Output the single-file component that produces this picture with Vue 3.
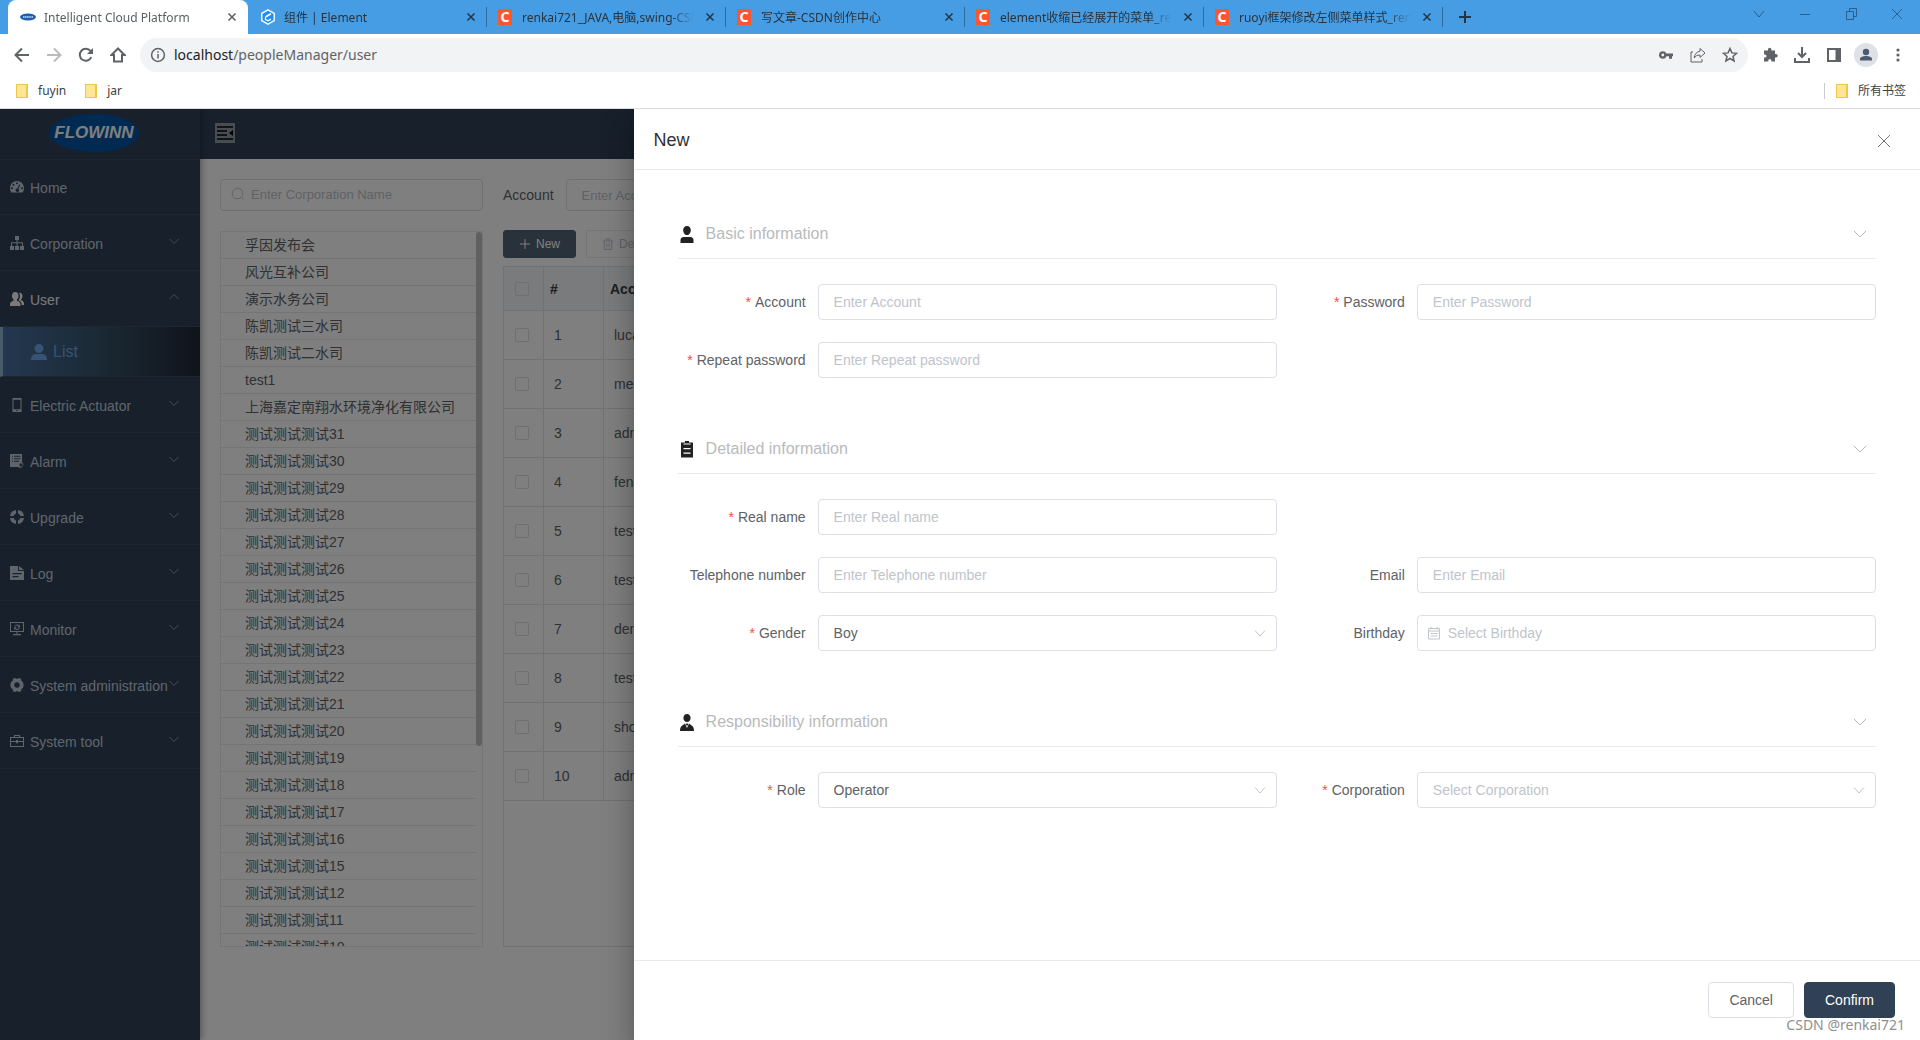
<template>
<div class="browser">

  <!-- Tab strip -->
  <header class="tab-strip">
    <div class="tab" v-for="(tab, i) in tabs" :key="tab.title" :class="{active: i===0}">
      <svg v-if="tab.icon==='flowinn'" class="favicon" viewBox="0 0 16 16">
        <ellipse cx="8" cy="8" rx="8" ry="3.5" fill="#1c5fae"/>
        <path d="M3 8h10" stroke="#c9dcf2" stroke-width="1.6" stroke-dasharray="1.4 .4"/>
      </svg>
      <svg v-else-if="tab.icon==='element'" class="favicon" viewBox="0 0 16 16">
        <path d="M8 .8l6.2 3.6v7.2L8 15.2 1.8 11.6V4.4z" fill="#1d8ffb" stroke="#fff" stroke-width="1.4"/>
        <path d="M10.8 5.3L5.5 8.2v2.3L8 11.8l3-1.7M6 7.3l5-2.6" fill="none" stroke="#fff" stroke-width="1.3"/>
      </svg>
      <span v-else class="favicon csdn">C</span>
      <span class="tab-title">{{ tab.title }}</span>
      <button class="tab-close" aria-label="Close tab">
        <svg viewBox="0 0 10 10"><path d="M1.5 1.5l7 7M8.5 1.5l-7 7"/></svg>
      </button>
    </div>
    <button class="tab-add" aria-label="New tab">
      <svg viewBox="0 0 12 12"><path d="M6 0v12M0 6h12"/></svg>
    </button>
    <div class="window-btns">
      <button v-for="b in windowBtns" :key="b.name" :aria-label="b.name">
        <svg viewBox="0 0 12 12"><path :d="b.d"/></svg>
      </button>
    </div>
  </header>

  <!-- Toolbar -->
  <div class="toolbar">
    <button class="nav-btn" aria-label="Back"><svg viewBox="0 0 16 16"><path d="M15 8H2M8 1.5L1.5 8 8 14.5"/></svg></button>
    <button class="nav-btn off" aria-label="Forward"><svg viewBox="0 0 16 16"><path d="M1 8h13M8 1.5L14.5 8 8 14.5"/></svg></button>
    <button class="nav-btn" aria-label="Reload">
      <svg viewBox="0 0 16 16"><path d="M13.3 10.2A6 6 0 1 1 12.5 4"/><path class="fill" d="M15 1v6H9z"/></svg>
    </button>
    <button class="nav-btn" aria-label="Home page"><svg viewBox="0 0 16 16"><path d="M8 1.5L1.5 8H4v6.5h8V8h2.5z"/></svg></button>

    <div class="omnibox">
      <svg class="info" viewBox="0 0 16 16"><circle cx="8" cy="8" r="6.4"/><path d="M8 7v4.5M8 4.2v1.6"/></svg>
      <a class="url" href="#"><b>localhost</b>/peopleManager/user</a>
      <button aria-label="Passwords">
        <svg viewBox="0 0 16 16"><path class="solid" fill-rule="evenodd" d="M4.8 4.2a3.8 3.8 0 1 0 3.6 5H11v2.5h3V9.2h1V6.5H8.4A3.8 3.8 0 0 0 4.8 4.2zm0 2.4a1.4 1.4 0 1 1 0 2.8 1.4 1.4 0 0 1 0-2.8z"/></svg>
      </button>
      <button aria-label="Share">
        <svg viewBox="0 0 16 16"><path class="thin" d="M3 5H1v10h11v-3M10 1.5L15 6l-5 4.5V8C7 8 5.5 9 4.2 11c.3-3.5 2-6 5.8-6.8z"/></svg>
      </button>
      <button aria-label="Bookmark this tab">
        <svg viewBox="0 0 16 16"><path class="mid" d="M8 1.5l1.9 4.4 4.7.4-3.6 3.1 1.1 4.6L8 11.5 3.9 14 5 9.4 1.4 6.3l4.7-.4z"/></svg>
      </button>
    </div>

    <div class="tools">
      <button aria-label="Extensions">
        <svg viewBox="0 0 16 16"><path class="solid" d="M6 2.5a1.7 1.7 0 0 1 3.4 0V3.5H13V7h1a1.7 1.7 0 0 1 0 3.4h-1V14.5H9.3v-1a1.5 1.5 0 0 0-3 0v1H2V10.5h1a1.5 1.5 0 0 0 0-3H2v-4h4z"/></svg>
      </button>
      <button aria-label="Downloads"><svg viewBox="0 0 16 16"><path d="M8 0v9.5M4 6l4 4 4-4M1 11v4h14v-4"/></svg></button>
      <button aria-label="Side panel"><svg viewBox="0 0 16 16"><path d="M2 2h12v12H2z"/><path class="solid" d="M9.5 2H14v12H9.5z"/></svg></button>
      <button class="avatar" aria-label="Profile">
        <svg viewBox="0 0 16 16"><circle class="solid" cx="8" cy="5" r="3.2"/><path class="solid" d="M2 13.5V12c0-2 3-3 6-3s6 1 6 3v1.5z"/></svg>
      </button>
      <button aria-label="Menu"><svg viewBox="0 0 16 16"><circle class="solid" cx="8" cy="3" r="1.6"/><circle class="solid" cx="8" cy="8" r="1.6"/><circle class="solid" cx="8" cy="13" r="1.6"/></svg></button>
    </div>
  </div>

  <!-- Bookmarks -->
  <nav class="bookmarks">
    <a href="#"><i class="folder"></i>fuyin</a>
    <a href="#"><i class="folder"></i>jar</a>
    <a href="#" class="all"><i class="folder"></i>所有书签</a>
  </nav>

  <div class="viewport">

    <!-- Sidebar -->
    <aside class="sidebar">
      <div class="logo"><span>FLOWINN</span></div>
      <nav>
        <template v-for="item in menu" :key="item.name">
          <a href="#" class="menu-item" :class="{open: item.open}">
            <svg class="menu-icon" viewBox="0 0 14 14"><path fill-rule="evenodd" :d="icons[item.icon]"/></svg>
            <span>{{ item.name }}</span>
            <svg v-if="item.icon!=='home'" class="arrow" :class="{up: item.open}" viewBox="0 0 10 10"><path d="M.5 3L5 7.5 9.5 3"/></svg>
          </a>
          <a v-if="item.open" href="#" class="menu-sub">
            <svg viewBox="0 0 16 16"><path :d="icons.person"/></svg>
            <span>List</span>
          </a>
        </template>
      </nav>
    </aside>

    <!-- Page behind the drawer -->
    <div class="main">
      <div class="navbar">
        <button class="hamburger" aria-label="Toggle menu">
          <svg viewBox="0 0 20 20"><path d="M2 4h16M2 8h10M2 12h10M2 16h16" stroke="#000" stroke-width="1.5"/><path d="M18 7v6l-4-3z"/></svg>
        </button>
      </div>
      <div class="content">
        <div class="left-col">
          <div class="search-box">
            <svg viewBox="0 0 14 14"><circle cx="6.5" cy="6.5" r="5.3"/><path d="M10.3 10.3l2.2 2.2"/></svg>
            <input type="text" placeholder="Enter Corporation Name" aria-label="Corporation name"/>
          </div>
          <div class="corp-box">
            <ul class="corp-list">
              <li v-for="c in corporations" :key="c">{{ c }}</li>
            </ul>
            <div class="thumb"></div>
          </div>
        </div>

        <div class="right-col">
          <div class="filter">
            <label for="filter-account">Account</label>
            <input id="filter-account" type="text" placeholder="Enter Account"/>
          </div>
          <div class="actions">
            <button class="btn-new"><svg viewBox="0 0 12 12"><path d="M6 1v10M1 6h10"/></svg>New</button>
            <button class="btn-del"><svg viewBox="0 0 12 12"><path d="M1 3h10M4 3V1h4v2M2.2 3v8.3h7.600V3M4.8 5v4.3M7.2 5v4.3"/></svg>Delete</button>
          </div>
          <div class="table-box">
            <table>
              <thead>
                <tr>
                  <th class="check"><input type="checkbox" aria-label="Select all"/></th>
                  <th class="num">#</th>
                  <th>Account</th>
                </tr>
              </thead>
              <tbody>
                <tr v-for="(u, i) in users" :key="i">
                  <td class="check"><input type="checkbox" :aria-label="'Select ' + u"/></td>
                  <td class="num">{{ i + 1 }}</td>
                  <td>{{ u }}</td>
                </tr>
              </tbody>
            </table>
          </div>
        </div>
      </div>
    </div>

    <div class="mask"></div>

    <!-- Drawer -->
    <section class="drawer">
      <header class="drawer-header">
        <h2>New</h2>
        <button aria-label="Close"><svg viewBox="0 0 14 14"><path d="M1 1l12 12M13 1L1 13"/></svg></button>
      </header>

      <form class="drawer-body" @submit.prevent>
        <div class="group" v-for="g in groups" :key="g.title">
          <div class="group-header">
            <svg class="group-icon" viewBox="0 0 16 18"><path fill-rule="evenodd" :d="icons[g.icon]"/></svg>
            <h3>{{ g.title }}</h3>
            <svg class="chevron" viewBox="0 0 14 14"><path d="M1 4l6 6 6-6"/></svg>
          </div>
          <div class="fields">
            <div class="field" v-for="f in g.fields" :key="f.id" :class="{wide: f.wide}">
              <label :for="f.id"><em v-if="f.required">*</em>{{ f.label }}</label>
              <div class="control">
                <template v-if="f.options">
                  <select :id="f.id" v-model="form[f.id]" :class="{empty: !form[f.id]}">
                    <option v-if="f.placeholder" value="">{{ f.placeholder }}</option>
                    <option v-for="o in f.options" :key="o">{{ o }}</option>
                  </select>
                  <svg class="caret" viewBox="0 0 12 12"><path d="M1 3.5L6 9l5-5.5"/></svg>
                </template>
                <template v-else>
                  <svg v-if="f.date" class="calendar" viewBox="0 0 14 14"><path d="M1.5 2.5h11v10.5h-11zM1.5 5h11M4 1v2.5M10 1v2.5M3.5 7.5h7M3.5 10h7"/></svg>
                  <input :id="f.id" v-model="form[f.id]" :type="f.type || 'text'" :class="{date: f.date}" :placeholder="f.placeholder"/>
                </template>
              </div>
            </div>
          </div>
        </div>
      </form>

      <footer class="drawer-footer">
        <button class="cancel">Cancel</button>
        <button class="confirm">Confirm</button>
      </footer>
    </section>

    <div class="watermark">CSDN @renkai721</div>
  </div>
</div>
</template>


<script setup>
import { reactive } from 'vue'

const tabs = [
  { title:'Intelligent Cloud Platform', icon:'flowinn' },
  { title:'组件 | Element', icon:'element' },
  { title:'renkai721_JAVA,电脑,swing-CSDN博客', icon:'csdn' },
  { title:'写文章-CSDN创作中心', icon:'csdn' },
  { title:'element收缩已经展开的菜单_renkai721', icon:'csdn' },
  { title:'ruoyi框架修改左侧菜单样式_renkai721', icon:'csdn' }
]

const windowBtns = [
  { name:'Search tabs', d:'M1 3l5 6 5-6' },
  { name:'Minimize', d:'M1 6.5h10' },
  { name:'Restore', d:'M1.5 3.5h7v8h-7zM4.5 3.5v-3h7v8h-3' },
  { name:'Close', d:'M1 1l10 10M11 1L1 11' }
]

const icons = {
  home:'M7 1a7 7 0 0 0-7 7c0 1.8.5 3.2 1.3 4.5h11.4C13.5 11.2 14 9.8 14 8a7 7 0 0 0-7-7zM7 2.3a1 1 0 1 1 0 2 1 1 0 0 1 0-2zM3.5 3.7a1 1 0 1 1 0 2 1 1 0 0 1 0-2zM2 7.3a1 1 0 1 1 0 2 1 1 0 0 1 0-2zM12 7.3a1 1 0 1 1 0 2 1 1 0 0 1 0-2zM9.3 4.3l1 .4-1.9 4.2a1.7 1.7 0 1 1-1-.4z',
  tree:'M5 0h4v4H7.5v2.2H13V10h1v4h-4v-4h2V7.2H7.5V10H9v4H5v-4h1.5V7.2H2V10h2v4H0v-4h1V6.2h5.5V4H5z',
  users:'M5.2 0C7.2 0 8.5 1.5 8.5 3.8c0 1.7-.6 3-1.5 3.8v1.1c1.9.7 3.3 1.4 3.5 3.3V14H0v-2c.2-1.9 1.5-2.6 3.5-3.3V7.6C2.6 6.8 2 5.5 2 3.8 2 1.5 3.2 0 5.2 0zM8.8.8c2.2-.5 3.7 1 3.7 3.2 0 1.5-.6 2.6-1.3 3.3v1C13 9 14 9.8 14 11.5V13h-2.3c0-2.5-.8-3.7-2.9-4.600V8c.8-1 1.2-2.5 1.1-4.2C9.8 2.5 9.5 1.5 8.8.8z',
  phone:'M2.5 0h9v14h-9zM3.5 1.8v9.5h7V1.8zM6 12.2v.9h2v-.9z',
  alarm:'M0 0h12v8.2a3 3 0 1 1-3.8 4.8H0zM2 1.8v1h1v-1zM4 1.8v1h6.5v-1zM2 4.3v1h1v-1zM4 4.3v1h6.5v-1zM2 6.8v1h1v-1zM4 6.8v1h5v-1zM11 9.3a1.6 1.6 0 1 0 0 3.2 1.6 1.6 0 0 0 0-3.2z',
  ring:'M6 0v3.6A3.6 3.6 0 0 0 3.6 6H0a7 7 0 0 1 6-6zM8 0v3.6A3.6 3.6 0 0 1 10.4 6H14a7 7 0 0 0-6-6zM0 8h3.6A3.6 3.6 0 0 0 6 10.4V14a7 7 0 0 1-6-6zM14 8h-3.6A3.6 3.6 0 0 1 8 10.4V14a7 7 0 0 0 6-6z',
  file:'M0 0h8v5h6v9H0zM9 0l5 4H9zM2.5 7v1.2h9V7zM2.5 10v1.2h6V10z',
  monitor:'M0 0h14v10H7.5v2H11v1.2H3V12h3.5v-2H0zM1 1v8h12V1zM7 2.5c1 0 1.8.5 2.2 1.2V3h.8v2.4H7.8v-.8h.9A2 2 0 0 0 5.2 4.7L4.4 4.4A2.8 2.8 0 0 1 7 2.5zM4.1 5.3h2.2v.7h-.9a2 2 0 0 0 3.4-.1l.8.3A2.8 2.8 0 0 1 4.9 7v.6h-.8z',
  gear:'M5 0l2 1 2-1 2 .8.4 2.1 1.8 1.3V6L14 7l-.8 1v1.800l-1.8 1.3-.4 2.1L9 14l-2-1-2 1-2-.8-.4-2.1L.8 9.800V8L0 7l.8-1V4.200l1.800-1.300L3 .8zM7 4.300a2.7 2.7 0 1 0 0 5.4 2.7 2.7 0 0 0 0-5.4z',
  tool:'M4 1h6v2h4v10H0V3h4zM5 2v1h4V2zM1 4v3h5V6h2v1h5V4zM1 8v4h12V8H8v1.2H6V8z',
  person:'M8 0a4.5 4.5 0 0 1 0 9 4.5 4.5 0 0 1 0-9zM0 16c0-4 2-6 5-6h6c3 0 5 2 5 6z',
  basic:'M8 1c2.4 0 3.8 1.8 3.8 4.2S10.2 10 8 10 4.200 7.600 4.200 5.200 5.600 1 8 1zM1.500 18v-3c0-2 1.500-3 3.500-3h6c2 0 3.500 1 3.500 3v3z',
  detail:'M6 1h4v1.500h4V17.500H2V2.500h4zM4.500 3.500v1h7v-1zM4.500 8v1.300h7V8zM4.500 12.500v1.300h7v-1.300z',
  duty:'M8 1c2.200 0 3.600 1.800 3.600 4S10.200 9 8 9 4.400 7.200 4.400 5 5.800 1 8 1zM1 18c0-3 .8-4.800 3-6l2-1.500L8 15l2-4.500 2 1.500c2.200 1.200 3 3 3 6zM7.200 10.500h1.600l.4 1L8 13l-1.200-1.500z'
}

const menu = [
  { name:'Home', icon:'home' },
  { name:'Corporation', icon:'tree' },
  { name:'User', icon:'users', open:true },
  { name:'Electric Actuator', icon:'phone' },
  { name:'Alarm', icon:'alarm' },
  { name:'Upgrade', icon:'ring' },
  { name:'Log', icon:'file' },
  { name:'Monitor', icon:'monitor' },
  { name:'System administration', icon:'gear' },
  { name:'System tool', icon:'tool' }
]

const corporations = [
  '孚因发布会', '风光互补公司', '演示水务公司', '陈凯测试三水司', '陈凯测试二水司',
  'test1', '上海嘉定南翔水环境净化有限公司',
  ...[31,30,29,28,27,26,25,24,23,22,21,20,19,18,17,16,15,12,11,10].map(n => '测试测试测试' + n)
]

const users = ['lucas', 'merry', 'admin1', 'feng', 'test01', 'test02', 'demo', 'test03', 'shop', 'admin']

const form = reactive({
  account:'',
  password:'',
  repeat:'',
  realName:'',
  phone:'',
  email:'',
  gender:'Boy',
  birthday:'',
  role:'Operator',
  corporation:''
})

const groups = [
  {
    title:'Basic information',
    icon:'basic',
    fields:[
      { id:'account', label:'Account', placeholder:'Enter Account', required:true },
      { id:'password', label:'Password', placeholder:'Enter Password', required:true, type:'password' },
      { id:'repeat', label:'Repeat password', placeholder:'Enter Repeat password', required:true, type:'password' }
    ]
  },
  {
    title:'Detailed information',
    icon:'detail',
    fields:[
      { id:'realName', label:'Real name', placeholder:'Enter Real name', required:true, wide:true },
      { id:'phone', label:'Telephone number', placeholder:'Enter Telephone number' },
      { id:'email', label:'Email', placeholder:'Enter Email' },
      { id:'gender', label:'Gender', required:true, options:['Boy', 'Girl'] },
      { id:'birthday', label:'Birthday', placeholder:'Select Birthday', date:true }
    ]
  },
  {
    title:'Responsibility information',
    icon:'duty',
    fields:[
      { id:'role', label:'Role', required:true, options:['Operator', 'Administrator'] },
      { id:'corporation', label:'Corporation', placeholder:'Select Corporation', required:true, options:['test1'] }
    ]
  }
]
</script>


<style>
body{
  margin:0;
}
</style>

<style scoped>
*{
  box-sizing:border-box;
}

.browser{
  height:100vh;
  display:flex;
  flex-direction:column;
  background:#fff;
  font-family:"Liberation Sans","Noto Sans CJK SC",sans-serif;
  font-size:14px;
  color:#606266;
}

button{
  padding:0;
  border:none;
  background:none;
  font:inherit;
  color:inherit;
  cursor:pointer;
  display:flex;
  align-items:center;
  justify-content:center;
}

a{
  color:inherit;
  text-decoration:none;
}

svg{
  display:block;
  flex:none;
  fill:none;
  stroke:currentColor;
}

input,
select{
  font:inherit;
  outline:none;
}

/* tab strip */
.tab-strip{
  height:34px;
  flex:none;
  padding-left:8px;
  display:flex;
  background:#479de4;
  color:#27333f;
  font-family:"Noto Sans","Noto Sans CJK SC",sans-serif;
  font-size:12px;
}

.tab{
  width:239px;
  padding:0 8px 0 11px;
  display:flex;
  align-items:center;
  gap:8px;
  background:linear-gradient(#2d6c9f,#2d6c9f) right center / 1px 20px no-repeat;
}

.tab.active{
  width:240px;
  padding-left:12px;
  background:#fff;
  border-radius:8px 8px 0 0;
  color:#5a5e63;
}

.tab.active + .tab{
  padding-left:12px;
}

.favicon{
  width:16px;
  height:16px;
  stroke:none;
}

.csdn{
  width:14px;
  margin-right:2px;
  flex:none;
  background:#fc5531;
  color:#fff;
  font-weight:bold;
  font-size:14px;
  line-height:15px;
  text-align:center;
}

.tab-title{
  flex:1;
  overflow:hidden;
  white-space:nowrap;
  mask-image:linear-gradient(90deg,#000 calc(100% - 24px),transparent);
}

.tab-close{
  width:16px;
  height:16px;
}

.tab-close svg{
  width:10px;
  stroke-width:1.5;
}

.tab-add{
  width:44px;
}

.tab-add svg{
  width:12px;
  stroke-width:2;
}

.window-btns{
  margin-left:auto;
  display:flex;
  height:28px;
  color:#2a5f8c;
}

.window-btns button{
  width:46px;
}

.window-btns svg{
  width:12px;
}

/* toolbar */
.toolbar{
  height:41px;
  flex:none;
  padding:0 6px;
  display:flex;
  align-items:center;
  color:#5f6368;
  font-family:"Noto Sans","Noto Sans CJK SC",sans-serif;
}

.toolbar svg{
  width:16px;
  height:16px;
  stroke-width:2;
}

.toolbar .solid,
.toolbar .fill{
  fill:currentColor;
  stroke:none;
}

.toolbar .thin{
  stroke-width:1;
}

.toolbar .mid{
  stroke-width:1.5;
}

.nav-btn,
.omnibox button,
.tools button{
  width:32px;
  height:32px;
}

.nav-btn.off{
  color:#b9bbbe;
}

.omnibox{
  flex:1;
  height:34px;
  margin:0 6px;
  padding:0 2px 0 10px;
  border-radius:17px;
  display:flex;
  align-items:center;
  background:#f1f3f4;
}

.omnibox .info{
  stroke-width:1.5;
}

.url{
  flex:1;
  margin-left:8px;
}

.url b{
  font-weight:normal;
  color:#202124;
}

.tools{
  display:flex;
}

.tools .avatar{
  width:24px;
  height:24px;
  margin:4px;
  border-radius:50%;
  background:#dee1e6;
  color:#4d5a70;
}

/* bookmarks */
.bookmarks{
  height:34px;
  flex:none;
  padding:0 14px 2px 16px;
  display:flex;
  align-items:center;
  gap:19px;
  border-bottom:1px solid #dadce0;
  font-family:"Noto Sans","Noto Sans CJK SC",sans-serif;
  font-size:12px;
  line-height:16px;
  color:#3c4043;
}

.bookmarks a{
  display:flex;
  align-items:center;
  gap:10px;
}

.bookmarks .all{
  margin-left:auto;
  padding-left:11px;
  border-left:1px solid #c8cacd;
}

.folder{
  width:12px;
  height:14px;
  border:1px solid #ecc94b;
  border-right-width:2px;
  background:#ffe694;
}

/* app */
.viewport{
  flex:1;
  min-height:0;
  position:relative;
  overflow:hidden;
  display:flex;
}

.sidebar{
  width:200px;
  flex:none;
  background:#304156;
  box-shadow:2px 0 6px rgba(0,21,41,0.35);
  z-index:1;
  color:#bfcbd9;
}

.logo{
  height:50px;
  padding:0 12px 2px 0;
  display:flex;
  align-items:center;
  justify-content:center;
}

.logo span{
  width:90px;
  height:38px;
  border-radius:50%;
  background:#0054a4;
  color:#fff;
  font-size:17px;
  font-weight:bold;
  font-style:italic;
  line-height:38px;
  text-align:center;
}

.sidebar nav{
  border-top:1px solid #3d4c60;
}

.menu-item{
  height:56px;
  padding:2px 21px 0 10px;
  display:flex;
  align-items:center;
  border-bottom:1px solid #3d4c60;
  white-space:nowrap;
}

.menu-item:first-child{
  height:55px;
}

.menu-item.open{
  color:#f4f4f5;
}

.menu-icon{
  width:14px;
  height:14px;
  margin:0 6px 2px 0;
  fill:currentColor;
  stroke:none;
}

.arrow{
  width:10px;
  height:10px;
  margin:0 0 6px auto;
  color:#8c97a5;
}

.arrow.up{
  transform:rotate(180deg);
}

.menu-sub{
  height:50px;
  padding-left:28px;
  display:flex;
  align-items:center;
  gap:6px;
  border-left:3px solid #8fb6d8;
  border-bottom:1px solid #3d4c60;
  background:linear-gradient(90deg,#4670a0,#365268 50%,#202838);
  color:#6ea6e6;
  font-size:16px;
}

.menu-sub svg{
  width:16px;
  height:16px;
  fill:currentColor;
  stroke:none;
}

.main{
  flex:1;
  min-width:0;
  display:flex;
  flex-direction:column;
}

.navbar{
  height:50px;
  flex:none;
  padding:0 15px 2px;
  display:flex;
  align-items:center;
  background:#304156;
}

.hamburger{
  width:20px;
  height:20px;
  background:#909aa8;
}

.hamburger svg{
  width:20px;
  fill:#000;
  stroke:none;
}

.content{
  flex:1;
  min-height:0;
  padding:20px 20px 93px;
  display:flex;
  gap:20px;
}

.left-col{
  width:263px;
  flex:none;
  display:flex;
  flex-direction:column;
  gap:20px;
}

.search-box{
  height:32px;
  flex:none;
  padding:0 10px 2px;
  display:flex;
  align-items:center;
  gap:6px;
  border:1px solid #dcdfe6;
  border-radius:4px;
  color:#c0c4cc;
}

.search-box svg{
  width:14px;
}

.search-box input{
  flex:1;
  min-width:0;
  padding:0;
  border:none;
  background:none;
  font-size:13px;
}

input::placeholder{
  color:#c0c4cc;
  opacity:1;
}

.corp-box{
  flex:1;
  min-height:0;
  position:relative;
  border:1px solid #e6ebf5;
}

.corp-list{
  height:100%;
  margin:0 6px 0 0;
  padding:0;
  overflow:hidden;
  list-style:none;
}

.corp-list li{
  height:27px;
  padding-left:24px;
  line-height:26px;
  border-bottom:1px solid #e6e9ef;
}

.thumb{
  position:absolute;
  top:0;
  right:0;
  width:6px;
  height:72%;
  border-radius:3px;
  background:#c1c1c1;
}

.right-col{
  flex:1;
  min-width:0;
  display:flex;
  flex-direction:column;
}

.filter{
  display:flex;
  align-items:center;
  gap:12px;
}

.filter input{
  width:240px;
  height:32px;
  padding:0 15px;
  border:1px solid #dcdfe6;
  border-radius:4px;
  font-size:13px;
}

.actions{
  display:flex;
  gap:10px;
  margin:19px 0 8px;
}

.actions button{
  height:28px;
  padding:0 15px;
  gap:5px;
  border:1px solid #e6ebf5;
  border-radius:3px;
  font-size:12px;
  color:#c0c4cc;
}

.actions .btn-new{
  border-color:#536475;
  background:#536475;
  color:#fff;
}

.actions svg{
  width:12px;
}

.table-box{
  flex:1;
  min-height:0;
  border:1px solid #dfe6ec;
}

table{
  width:100%;
  border-spacing:0;
  table-layout:fixed;
}

th,
td{
  height:49px;
  padding:0 10px;
  text-align:left;
  border-bottom:1px solid #dfe6ec;
  border-right:1px solid #dfe6ec;
}

th{
  height:44px;
  padding:0 6px;
  background:#f4f6f9;
  color:#3c3f45;
}

th.num{
  width:60px;
}

.check{
  width:40px;
  padding:0 0 0 11px;
}

.check input{
  appearance:none;
  display:block;
  width:14px;
  height:14px;
  margin:0;
  border:1px solid #dcdfe6;
  border-radius:2px;
}

.mask{
  position:absolute;
  inset:0;
  z-index:2;
  background:rgba(0,0,0,0.5);
}

/* drawer */
.drawer{
  position:absolute;
  top:0;
  right:0;
  bottom:0;
  z-index:3;
  width:67%;
  display:flex;
  flex-direction:column;
  background:#fff;
  box-shadow:0 8px 10px -5px rgba(0,0,0,0.2),0 16px 24px 2px rgba(0,0,0,0.14),0 6px 30px 5px rgba(0,0,0,0.12);
}

.drawer-header{
  height:61px;
  flex:none;
  padding:3px 29px 0 20px;
  display:flex;
  align-items:center;
  justify-content:space-between;
  border-bottom:1px solid #e8eaec;
}

.drawer-header h2{
  margin:0;
  font-size:18px;
  font-weight:normal;
  color:#303133;
}

.drawer-header svg{
  width:14px;
  color:#72767b;
}

.drawer-body{
  flex:1;
  min-height:0;
  padding:40px 44px 0;
}

.group-header{
  height:49px;
  padding:0 9px 0 1px;
  display:flex;
  align-items:center;
  gap:11px;
  border-bottom:1px solid #e8eaec;
}

.group-header h3{
  flex:1;
  margin:0;
  font-size:16px;
  font-weight:normal;
  color:#b8babd;
}

.group-icon{
  width:16px;
  height:18px;
  fill:#222;
  stroke:none;
}

.chevron{
  width:14px;
  color:#b4b7bd;
}

.fields{
  padding:25px 0;
  display:grid;
  grid-template-columns:1fr 1fr;
}

.field{
  display:flex;
  margin-bottom:22px;
}

.field.wide{
  grid-column:1 / -1;
  width:50%;
}

.field label{
  width:140px;
  flex:none;
  padding-right:12px;
  line-height:36px;
  text-align:right;
}

.field em{
  margin-right:4px;
  font-style:normal;
  color:#ff4949;
}

.control{
  flex:1;
  position:relative;
}

.control input,
.control select{
  appearance:none;
  display:block;
  width:100%;
  height:36px;
  padding:0 15px;
  border:1px solid #dcdfe6;
  border-radius:4px;
  background:#fff;
  color:#606266;
}

.control input{
  font-size:14px;
}

.control select.empty{
  color:#c0c4cc;
}

.control input.date{
  padding-left:30px;
}

.caret{
  position:absolute;
  right:11px;
  top:12px;
  width:12px;
  color:#c0c4cc;
  pointer-events:none;
}

.calendar{
  position:absolute;
  left:10px;
  top:11px;
  width:14px;
  color:#c0c4cc;
}

.drawer-footer{
  height:80px;
  flex:none;
  padding:0 25px 2px;
  display:flex;
  align-items:center;
  justify-content:flex-end;
  gap:10px;
  border-top:1px solid #e8eaec;
}

.drawer-footer button{
  height:36px;
  padding:0 20px;
  border:1px solid #dcdfe6;
  border-radius:4px;
}

.drawer-footer .confirm{
  border-color:#304156;
  background:#304156;
  color:#fff;
}

.watermark{
  position:absolute;
  right:15px;
  bottom:6px;
  z-index:4;
  font-family:"Noto Sans",sans-serif;
  font-size:14px;
  color:#8f8f8f;
  text-shadow:1px 1px 0 #fff;
}
</style>
